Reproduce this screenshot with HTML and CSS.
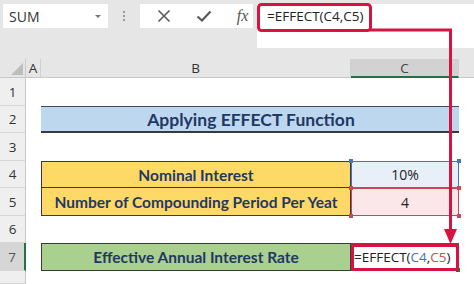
FILE: index.html
```html
<!DOCTYPE html>
<html lang="en">

<head>
	<meta charset="UTF-8">
	<meta name="viewport" content="width=device-width, initial-scale=1.0">
	<title>EFFECT Function</title>

	<link rel="stylesheet" href="styles.css">
</head>

<body>
	<div class="app">
		<div class="toolbar">
			<div class="name-box">
				<span>SUM</span>
				<span class="caret"></span>
			</div>
			<div class="grip"><i></i><i></i><i></i></div>
			<div class="fx-buttons">
				<svg width="14" height="14" viewBox="0 0 14 14"><path d="M1.5 1.5 12.5 12.5M12.5 1.5 1.5 12.5" stroke="#5a5a5a" stroke-width="1.6" fill="none"/></svg>
				<svg width="16" height="14" viewBox="0 0 16 14"><path d="M1.5 7.5 6 11.5 14.5 2.5" stroke="#5a5a5a" stroke-width="2.2" fill="none"/></svg>
				<span class="fx">fx</span>
			</div>
			<div class="formula">=EFFECT(C4,C5)</div>
		</div>

		<div class="sheet">
			<div class="corner"></div>
			<div class="col-head">A</div>
			<div class="col-head">B</div>
			<div class="col-head active">C</div>
			<div class="col-head last"></div>

			<div class="row-head">1</div>
			<div class="cell"></div><div class="cell"></div><div class="cell"></div><div class="cell"></div>

			<div class="row-head">2</div>
			<div class="cell"></div>
			<div class="cell title">Applying EFFECT Function</div>
			<div class="cell"></div>

			<div class="row-head">3</div>
			<div class="cell"></div><div class="cell"></div><div class="cell"></div><div class="cell"></div>

			<div class="row-head">4</div>
			<div class="cell"></div>
			<div class="cell label yellow">Nominal Interest</div>
			<div class="cell value ref-blue">
				10%
				<span class="handle tl"></span><span class="handle tr"></span>
			</div>
			<div class="cell"></div>

			<div class="row-head">5</div>
			<div class="cell"></div>
			<div class="cell label yellow second">Number of Compounding Period Per Yeat</div>
			<div class="cell value ref-red">
				4
				<span class="handle tl"></span><span class="handle tr"></span>
				<span class="handle bl"></span><span class="handle br"></span>
			</div>
			<div class="cell"></div>

			<div class="row-head">6</div>
			<div class="cell"></div><div class="cell"></div><div class="cell"></div><div class="cell"></div>

			<div class="row-head active">7</div>
			<div class="cell"></div>
			<div class="cell label green">Effective Annual Interest Rate</div>
			<div class="cell editing">=EFFECT(<span class="c4">C4</span>,<span class="c5">C5</span>)</div>
			<div class="cell"></div>

			<div class="row-head"></div>
			<div class="cell"></div><div class="cell"></div><div class="cell"></div><div class="cell"></div>
		</div>

		<svg class="annot" width="474" height="284" viewBox="0 0 474 284">
			<rect x="258.5" y="4.5" width="112" height="26" rx="3" fill="none" stroke="#d8133f" stroke-width="3"/>
			<path d="M370 30H450.5V233" fill="none" stroke="#d8133f" stroke-width="3"/>
			<path d="M444 229H457L450.5 244Z" fill="#d8133f"/>
			<rect x="352.5" y="245.5" width="105" height="24" rx="2" fill="none" stroke="#d8133f" stroke-width="3"/>
		</svg>
	</div>
</body>

</html>
```

FILE: styles.css
```css
body {
	margin: 0;
	padding: 0;
	font-family: "Open Sans", sans-serif;
	background-color: #fff;
}

.app {
	position: relative;
	width: 474px;
	height: 284px;
	overflow: hidden;
}

.toolbar {
	display: flex;
	align-items: flex-start;
	height: 59px;
	padding-top: 4px;
	box-sizing: border-box;
	background-color: #e6e6e6;
}

.name-box {
	display: flex;
	align-items: center;
	justify-content: space-between;
	width: 105px;
	height: 24px;
	margin-left: 3px;
	padding: 0 7px 0 6px;
	box-sizing: border-box;
	background-color: #fff;
	font-size: 14px;
	color: #333;
}

.caret {
	width: 0;
	height: 0;
	border-left: 3px solid transparent;
	border-right: 3px solid transparent;
	border-top: 3px solid #777;
}

.grip {
	display: flex;
	flex-direction: column;
	align-items: center;
	justify-content: center;
	gap: 2px;
	width: 32px;
	height: 24px;
}

.grip i {
	width: 2px;
	height: 2px;
	background-color: #9a9a9a;
}

.fx-buttons {
	display: flex;
	align-items: center;
	justify-content: space-around;
	width: 113px;
	height: 24px;
	padding-left: 4px;
	box-sizing: border-box;
	background-color: #fff;
}

.fx {
	font-family: "Liberation Serif", serif;
	font-style: italic;
	font-size: 16px;
	color: #555;
	margin-right: -8px;
}

.formula {
	flex: 1;
	height: 44px;
	margin-left: 4px;
	padding: 3px 0 0 10px;
	box-sizing: border-box;
	background-color: #fff;
	font-size: 13.5px;
	color: #222;
}

.sheet {
	display: grid;
	grid-template-columns: 26px 15px 310px 108px 1fr;
	grid-template-rows: 19px 28px 27px 28px 27px 28px 27px 28px 1fr;
	height: 225px;
}

.corner {
	position: relative;
	background-color: #e6e6e6;
	border-right: 1px solid #c8c8c8;
	border-bottom: 1px solid #c8c8c8;
}

.corner::after {
	content: "";
	position: absolute;
	right: 2px;
	bottom: 2px;
	border-left: 12px solid transparent;
	border-bottom: 12px solid #bdbdbd;
}

.col-head {
	display: flex;
	align-items: center;
	justify-content: center;
	background-color: #e6e6e6;
	border-right: 1px solid #d0d0d0;
	border-bottom: 1px solid #c8c8c8;
	font-size: 13.5px;
	color: #333;
}

.col-head.active {
	background-color: #d2d2d2;
	border-bottom: 2px solid #217346;
	color: #444;
}

.col-head.last {
	border-right: none;
}

.row-head {
	display: flex;
	align-items: center;
	justify-content: center;
	background-color: #efefef;
	border-right: 1px solid #c8c8c8;
	border-bottom: 1px solid #d6d6d6;
	font-size: 13.5px;
	color: #333;
}

.row-head.active {
	background-color: #d6d6d6;
	border-right: 2px solid #217346;
	color: #555;
}

.cell {
	display: flex;
	align-items: center;
	justify-content: center;
	position: relative;
	box-sizing: border-box;
	font-family: Lato, sans-serif;
	font-weight: bold;
	color: #1f3864;
}

.title {
	grid-column: span 2;
	background-color: #bdd7ee;
	border-top: 1px solid #3f4a5a;
	border-bottom: 2px solid #3a3a3a;
	font-size: 17.5px;
	padding-left: 2px;
}

.label {
	font-size: 15.5px;
	border: 1px solid #3a3a3a;
}

.yellow {
	background-color: #ffd966;
}

.second {
	border-top: none;
}

.green {
	background-color: #a9d08e;
}

.value {
	font-family: "Open Sans", sans-serif;
	font-weight: normal;
	font-size: 14px;
	color: #222;
}

.ref-blue {
	background-color: #e9eff9;
	border: 1px solid #4472c4;
}

.ref-red {
	background-color: #fbe6ea;
	border: 1px solid #c8475e;
}

.handle {
	position: absolute;
	width: 4px;
	height: 4px;
}

.ref-blue .handle {
	background-color: #4472c4;
}

.ref-red .handle {
	background-color: #c8475e;
}

.tl {
	left: -3px;
	top: -3px;
}

.tr {
	right: -3px;
	top: -3px;
}

.bl {
	left: -3px;
	bottom: -3px;
}

.br {
	right: -3px;
	bottom: -3px;
}

.editing {
	justify-content: flex-start;
	padding-left: 1px;
	border: 2px solid #217346;
	font-family: "Open Sans", sans-serif;
	font-weight: normal;
	font-size: 13.5px;
	color: #222;
}

.editing::after {
	content: "";
	position: absolute;
	right: -3px;
	bottom: -3px;
	width: 4px;
	height: 4px;
	background-color: #217346;
}

.c4 {
	color: #4472c4;
}

.c5 {
	color: #c0504d;
}

.annot {
	position: absolute;
	left: 0;
	top: 0;
	pointer-events: none;
}
```
